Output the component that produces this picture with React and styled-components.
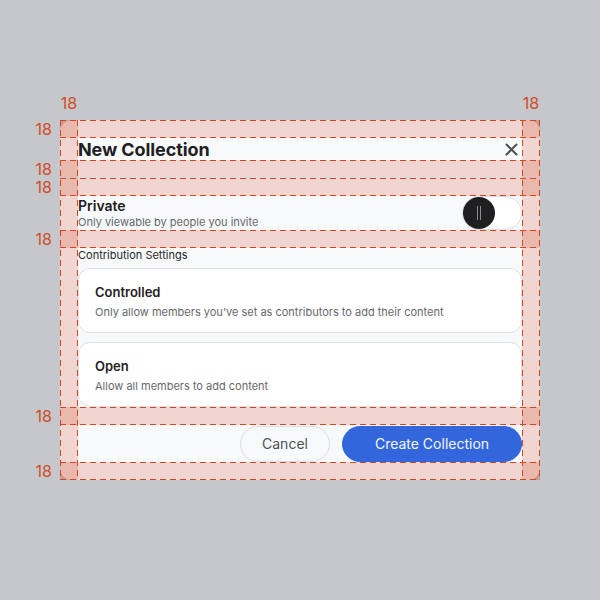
import React from 'react'
import styled, { createGlobalStyle } from 'styled-components'

const GlobalStyle = createGlobalStyle`
  html, body { margin: 0; padding: 0; }
  body {
    background: #c6c7cb;
    font-family: Inter, "Noto Sans", sans-serif;
  }
`;

const dashH = 'repeating-linear-gradient(90deg, #d4461f 0 6px, transparent 6px 10px)';
const dashV = 'repeating-linear-gradient(180deg, #d4461f 0 6px, transparent 6px 10px)';
const bandFill = 'rgba(212, 85, 55, 0.22)';

const Page = styled.div`
  width: 600px;
  height: 600px;
  display: flex;
  align-items: center;
  justify-content: center;
`;

const Modal = styled.div`
  position: relative;
  width: 480px;
  box-sizing: border-box;
  padding: 0 18px;
  background: #f8f9fb;
  border-radius: 12px;
  display: flex;
  flex-direction: column;
`;

// spacing annotation: horizontal band over a gap
const Band = styled.div`
  position: relative;
  flex: none;
  height: ${p => p.$h || 18}px;
  margin: 0 -18px;
  background: ${bandFill};
  &::before, &::after {
    content: '';
    position: absolute;
    left: 0;
    right: 0;
    height: 1px;
    background: ${dashH};
  }
  &::before { top: 0; }
  &::after { bottom: 0; ${p => (p.$open ? 'display: none;' : '')} }
`;

// spacing annotation: vertical strip over side padding
const Strip = styled.div`
  position: absolute;
  top: 0;
  bottom: 0;
  width: 18px;
  ${p => (p.$side === 'left' ? 'left: 0;' : 'right: 0;')}
  background: ${bandFill};
  pointer-events: none;
  &::before, &::after {
    content: '';
    position: absolute;
    top: 0;
    bottom: 0;
    width: 1px;
    background: ${dashV};
  }
  &::before { left: 0; }
  &::after { right: 0; }
`;

const Measure = styled.span`
  position: absolute;
  font-family: Inter, sans-serif;
  font-size: 16px;
  line-height: 18px;
  color: #d14e29;
  white-space: nowrap;
`;

const SideMeasure = styled(Measure)`
  right: 100%;
  margin-right: 8px;
  top: 50%;
  transform: translateY(-50%);
`;

const TopMeasure = styled(Measure)`
  bottom: 100%;
  margin-bottom: 8px;
  left: 50%;
  transform: translateX(-50%);
`;

const Header = styled.div`
  height: 22px;
  display: flex;
  align-items: center;
  justify-content: space-between;
`;

const Title = styled.h2`
  margin: 0;
  font-size: 18px;
  font-weight: 700;
  color: #1f2023;
  letter-spacing: -0.1px;
`;

const CloseButton = styled.button`
  border: 0;
  background: none;
  padding: 0;
  margin-right: 4px;
  width: 13px;
  height: 13px;
  display: flex;
  color: #505257;
`;

const Divider = styled.div`
  height: 1px;
  margin: 0 -18px;
  background: #dcdde0;
`;

const PrivateRow = styled.div`
  height: 34px;
  display: flex;
  align-items: center;
  justify-content: space-between;
`;

const TextBlock = styled.div`
  display: flex;
  flex-direction: column;
  gap: ${p => p.$gap || 1}px;
`;

const RowTitle = styled.div`
  font-size: ${p => p.$size || 14}px;
  font-weight: 600;
  color: #1f2023;
  line-height: 17px;
`;

const RowSub = styled.div`
  font-size: 11px;
  color: #66686d;
  line-height: 15px;
`;

const Toggle = styled.div`
  width: 60px;
  height: 34px;
  box-sizing: border-box;
  border: 1px solid #dcdde0;
  border-radius: 17px;
  background: #fff;
  display: flex;
  align-items: center;
`;

const Knob = styled.div`
  width: 32px;
  height: 32px;
  border-radius: 50%;
  background: #1f1f21;
  display: flex;
  align-items: center;
  justify-content: center;
  gap: 2px;
  & > i {
    width: 1px;
    height: 14px;
    background: #8a8b8f;
  }
`;

const SectionLabel = styled.div`
  font-size: 11px;
  color: #26282c;
  line-height: 14px;
  margin-bottom: 6px;
`;

const Options = styled.div`
  display: flex;
  flex-direction: column;
  gap: 9px;
`;

const OptionCard = styled.div`
  height: 65px;
  box-sizing: border-box;
  padding: 2px 16px 0;
  border: 1px solid #dfe0e3;
  border-radius: 12px;
  background: #fff;
  display: flex;
  align-items: center;
`;

const Footer = styled.div`
  height: 37px;
  display: flex;
  align-items: flex-end;
  justify-content: flex-end;
  gap: 12px;
`;

const Button = styled.button`
  height: 36px;
  width: ${p => p.$w}px;
  border-radius: 18px;
  font-family: Inter, sans-serif;
  font-size: 14px;
  padding: 0 0 2px;
  border: 1px solid ${p => (p.$primary ? '#3366dd' : '#dcdde0')};
  background: ${p => (p.$primary ? '#3366dd' : '#f8f9fb')};
  color: ${p => (p.$primary ? '#f4f7ff' : '#505257')};
`;

const options = [
  { title: 'Controlled', sub: 'Only allow members you\u2019ve set as contributors to add their content' },
  { title: 'Open', sub: 'Allow all members to add content' },
];

export default function App() {
  return (
    <Page>
      <GlobalStyle />
      <Modal>
        <Band><SideMeasure>18</SideMeasure></Band>
        <Header>
          <Title>New Collection</Title>
          <CloseButton aria-label="Close">
            <svg width="13" height="13" viewBox="0 0 13 13">
              <path d="M1.5 1.5 L11.5 11.5 M11.5 1.5 L1.5 11.5" stroke="currentColor" strokeWidth="2.1" strokeLinecap="round" />
            </svg>
          </CloseButton>
        </Header>
        <Band $h={17} $open><SideMeasure>18</SideMeasure></Band>
        <Divider />
        <Band $h={18}><SideMeasure>18</SideMeasure></Band>
        <PrivateRow>
          <TextBlock>
            <RowTitle>Private</RowTitle>
            <RowSub>Only viewable by people you invite</RowSub>
          </TextBlock>
          <Toggle>
            <Knob><i /><i /></Knob>
          </Toggle>
        </PrivateRow>
        <Band><SideMeasure>18</SideMeasure></Band>
        <SectionLabel>Contribution Settings</SectionLabel>
        <Options>
          {options.map(o => (
            <OptionCard key={o.title}>
              <TextBlock $gap={4}>
                <RowTitle $size={13}>{o.title}</RowTitle>
                <RowSub>{o.sub}</RowSub>
              </TextBlock>
            </OptionCard>
          ))}
        </Options>
        <Band><SideMeasure>18</SideMeasure></Band>
        <Footer>
          <Button $w={90}>Cancel</Button>
          <Button $w={180} $primary>Create Collection</Button>
        </Footer>
        <Band><SideMeasure>18</SideMeasure></Band>
        <Strip $side="left"><TopMeasure>18</TopMeasure></Strip>
        <Strip $side="right"><TopMeasure>18</TopMeasure></Strip>
      </Modal>
    </Page>
  );
}
